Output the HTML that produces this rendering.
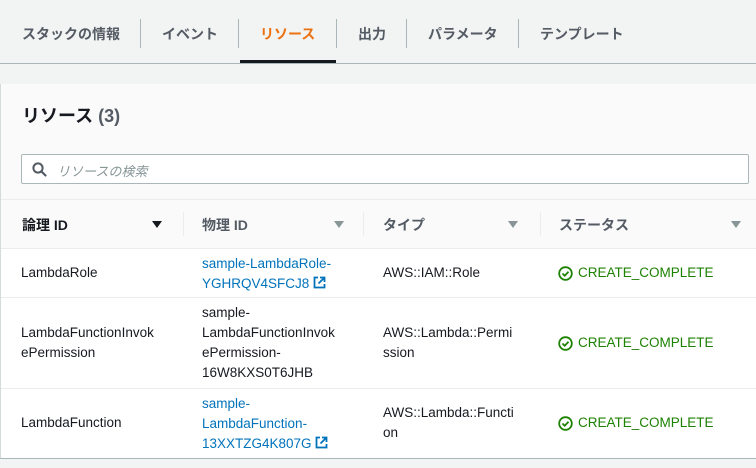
<!DOCTYPE html>
<html><head><meta charset="utf-8"><style>
*{margin:0;padding:0;box-sizing:border-box}
body{width:756px;height:468px;background:#f2f3f3;font-family:"Liberation Sans","Noto Sans CJK JP",sans-serif;font-size:13px;color:#16191f;position:relative;overflow:hidden}
.a{position:absolute;white-space:nowrap}
.tab{font-weight:bold;font-size:14px;color:#545b64;top:24px}
.sep{position:absolute;width:1px;background:#aab7b8}
.panel{position:absolute;left:0;top:84px;width:756px;height:375px;background:#fafafa;border-left:1px solid #d5dbdb;border-bottom:2px solid #aab7b8}
.hd{font-weight:bold;font-size:14px;color:#545b64;top:215px}
.hl{position:absolute;height:1px;background:#eaeded;left:1px;width:755px}
.cell{position:absolute;line-height:20px;color:#16191f;font-size:13.5px;white-space:nowrap}
.lnk{color:#0073bb}
.ok{color:#1d8102;display:flex;align-items:center;gap:5px}
.tri{position:absolute;width:0;height:0;border-left:5px solid transparent;border-right:5px solid transparent;border-top:7px solid #879596;top:221px}
</style></head><body>
<div class="a tab" style="left:22px">スタックの情報</div>
<div class="sep" style="left:140px;top:19px;height:29px"></div>
<div class="a tab" style="left:162px">イベント</div>
<div class="sep" style="left:238px;top:19px;height:29px"></div>
<div class="a tab" style="left:260px;color:#ec7211">リソース</div>
<div class="sep" style="left:336px;top:19px;height:29px"></div>
<div class="a tab" style="left:358px">出力</div>
<div class="sep" style="left:406px;top:19px;height:29px"></div>
<div class="a tab" style="left:428px">パラメータ</div>
<div class="sep" style="left:518px;top:19px;height:29px"></div>
<div class="a tab" style="left:540px">テンプレート</div>
<div style="position:absolute;left:240px;top:60px;width:96px;height:3px;background:#16191f"></div>
<div style="position:absolute;left:0;top:63px;width:756px;height:1px;background:#aab7b8"></div>

<div class="panel"></div>
<div class="a" style="left:22px;top:102px;font-size:18px;font-weight:bold">リソース <span style="color:#545b64">(3)</span></div>
<div style="position:absolute;left:21px;top:154px;width:728px;height:30px;background:#fff;border:1px solid #aab7b8;border-radius:2px"></div>
<svg class="a" style="left:32px;top:162px" width="15" height="15" viewBox="0 0 15 15"><circle cx="6" cy="6" r="4.6" fill="none" stroke="#545b64" stroke-width="2"/><path d="M9.5 9.5L13.5 13.5" stroke="#545b64" stroke-width="2.2" stroke-linecap="round"/></svg>
<div class="a" style="left:57px;top:161px;font-style:italic;color:#879596;font-size:13px">リソースの検索</div>

<div class="hl" style="top:199px"></div>
<div class="a hd" style="left:22px;color:#16191f">論理 ID</div>
<div class="tri" style="left:152px;border-top-color:#16191f"></div>
<div class="sep" style="left:183px;top:212px;height:24px;background:#eaeded"></div>
<div class="a hd" style="left:202px">物理 ID</div>
<div class="tri" style="left:334px"></div>
<div class="sep" style="left:363px;top:212px;height:24px;background:#eaeded"></div>
<div class="a hd" style="left:383px">タイプ</div>
<div class="tri" style="left:508px"></div>
<div class="sep" style="left:540px;top:212px;height:24px;background:#eaeded"></div>
<div class="a hd" style="left:559px">ステータス</div>
<div class="tri" style="left:731px"></div>

<div style="position:absolute;left:1px;top:248px;width:755px;height:210px;background:#fff"></div>
<div class="hl" style="top:248px"></div>
<div class="hl" style="top:297px"></div>
<div class="hl" style="top:388px"></div>

<div class="cell" style="left:21px;top:263px">LambdaRole</div>
<div class="cell lnk" style="left:202px;top:254px">sample-LambdaRole-<br>YGHRQV4SFCJ8 <svg width="13" height="13" viewBox="0 0 13 13" style="vertical-align:-1px"><path d="M5 1.5H1.5v10h10V8" fill="none" stroke="#0073bb" stroke-width="1.8"/><path d="M7 1.5h4.5V6M11.5 1.5L5.5 7.5" fill="none" stroke="#0073bb" stroke-width="1.8"/></svg></div>
<div class="cell" style="left:383px;top:263px">AWS::IAM::Role</div>
<div class="cell ok" style="left:558px;top:263px"><svg width="15" height="15" viewBox="0 0 15 15"><circle cx="7.5" cy="7.5" r="6.3" fill="none" stroke="#1d8102" stroke-width="1.8"/><path d="M4.5 7.5l2.2 2.2 3.8-4" fill="none" stroke="#1d8102" stroke-width="1.8"/></svg>CREATE_COMPLETE</div>

<div class="cell" style="left:21px;top:323px">LambdaFunctionInvok<br>ePermission</div>
<div class="cell" style="left:202px;top:303px">sample-<br>LambdaFunctionInvok<br>ePermission-<br>16W8KXS0T6JHB</div>
<div class="cell" style="left:383px;top:323px">AWS::Lambda::Permi<br>ssion</div>
<div class="cell ok" style="left:558px;top:333px"><svg width="15" height="15" viewBox="0 0 15 15"><circle cx="7.5" cy="7.5" r="6.3" fill="none" stroke="#1d8102" stroke-width="1.8"/><path d="M4.5 7.5l2.2 2.2 3.8-4" fill="none" stroke="#1d8102" stroke-width="1.8"/></svg>CREATE_COMPLETE</div>

<div class="cell" style="left:21px;top:413px">LambdaFunction</div>
<div class="cell lnk" style="left:202px;top:394px">sample-<br>LambdaFunction-<br>13XXTZG4K807G <svg width="13" height="13" viewBox="0 0 13 13" style="vertical-align:-1px"><path d="M5 1.5H1.5v10h10V8" fill="none" stroke="#0073bb" stroke-width="1.8"/><path d="M7 1.5h4.5V6M11.5 1.5L5.5 7.5" fill="none" stroke="#0073bb" stroke-width="1.8"/></svg></div>
<div class="cell" style="left:383px;top:403px">AWS::Lambda::Functi<br>on</div>
<div class="cell ok" style="left:558px;top:413px"><svg width="15" height="15" viewBox="0 0 15 15"><circle cx="7.5" cy="7.5" r="6.3" fill="none" stroke="#1d8102" stroke-width="1.8"/><path d="M4.5 7.5l2.2 2.2 3.8-4" fill="none" stroke="#1d8102" stroke-width="1.8"/></svg>CREATE_COMPLETE</div>
</body></html>
